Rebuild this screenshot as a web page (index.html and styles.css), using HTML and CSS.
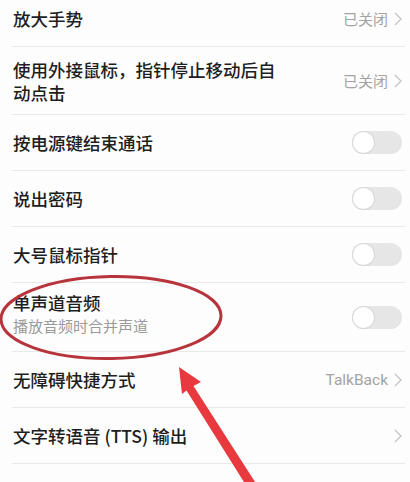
FILE: index.html
```html
<!DOCTYPE html>
<html lang="zh-CN">
<head>
<meta charset="utf-8">
<title>辅助功能</title>
<link rel="stylesheet" href="styles.css">
</head>
<body>
<div class="page">
  <ul class="list">
    <li class="row first">
      <div class="texts"><span class="title">放大手势</span></div>
      <div class="value"><span>已关闭</span><svg class="chev" viewBox="0 0 8 14"><path d="M1 1l6 6-6 6"/></svg></div>
    </li>
    <li class="row double">
      <div class="texts"><span class="title">使用外接鼠标，指针停止移动后自<br>动点击</span></div>
      <div class="value"><span>已关闭</span><svg class="chev" viewBox="0 0 8 14"><path d="M1 1l6 6-6 6"/></svg></div>
    </li>
    <li class="row">
      <div class="texts"><span class="title">按电源键结束通话</span></div>
      <div class="switch"><span class="knob"></span></div>
    </li>
    <li class="row">
      <div class="texts"><span class="title">说出密码</span></div>
      <div class="switch"><span class="knob"></span></div>
    </li>
    <li class="row">
      <div class="texts"><span class="title">大号鼠标指针</span></div>
      <div class="switch"><span class="knob"></span></div>
    </li>
    <li class="row double">
      <div class="texts"><span class="title">单声道音频</span><span class="sub">播放音频时合并声道</span></div>
      <div class="switch"><span class="knob"></span></div>
    </li>
    <li class="row">
      <div class="texts"><span class="title">无障碍快捷方式</span></div>
      <div class="value"><span class="latin">TalkBack</span><svg class="chev" viewBox="0 0 8 14"><path d="M1 1l6 6-6 6"/></svg></div>
    </li>
    <li class="row">
      <div class="texts"><span class="title">文字转语音 (TTS) 输出</span></div>
      <div class="value"><svg class="chev" viewBox="0 0 8 14"><path d="M1 1l6 6-6 6"/></svg></div>
    </li>
    <li class="row double last">
      <div class="texts"><span class="title faint">色彩校正</span></div>
      <div class="value"><span>已关闭</span></div>
    </li>
  </ul>
  <svg class="annot" viewBox="0 0 410 482" width="410" height="482">
    <ellipse cx="111" cy="317.5" rx="110" ry="41" class="ring" transform="rotate(-1 111 317)"/>
    <polygon class="arrow" points="179,367 182,394 186.5,390.5 249,490 257,485 193.5,386 201,382"/>
  </svg>
</div>
</body>
</html>
```
FILE: styles.css
```css
* { box-sizing: border-box; }
html, body { margin: 0; padding: 0; }
body {
  width: 410px;
  height: 482px;
  overflow: hidden;
  background: #fdfdfd;
  font-family: "Noto Sans CJK SC", "Noto Sans", sans-serif;
}
.page {
  position: relative;
  width: 410px;
  height: 482px;
  overflow: hidden;
}
.list {
  list-style: none;
  margin: -9px 5px 0 12px;
  padding: 0;
}
.row {
  display: flex;
  align-items: center;
  justify-content: space-between;
  height: 56px;
  padding: 0 3px 0 1px;
  border-bottom: 1px solid #e9e9e9;
}
.row.double { height: 68px; }
.row.double:nth-child(6) { height: 69px; }
.texts {
  display: flex;
  flex-direction: column;
}
.title {
  font-size: 17.5px;
  line-height: 23px;
  font-weight: 500;
  color: #1e1e1e;
}
.sub {
  font-size: 15px;
  line-height: 22px;
  color: #9a9a9a;
  margin-top: 1px;
}
.row.double:nth-child(6) .texts { margin-top: -6px; }
.faint { color: #bdbdbd; margin-top: 40px; }
.value {
  display: flex;
  align-items: center;
  gap: 6px;
  color: #a3a3a3;
  font-size: 15px;
}
.latin { font-family: Roboto, "Noto Sans", sans-serif; font-size: 15.5px; }
.chev {
  width: 8px;
  height: 14px;
  fill: none;
  stroke: #c4c4c4;
  stroke-width: 1.3;
}
.switch {
  width: 50px;
  height: 23px;
  border-radius: 12px;
  background: #e6e6e6;
  display: flex;
  align-items: center;
  padding: 0 1px;
}
.knob {
  width: 21px;
  height: 21px;
  border-radius: 50%;
  background: #ffffff;
  box-shadow: 0 0 0 1px #d8d8d8;
}
.annot {
  position: absolute;
  left: 0;
  top: 0;
  pointer-events: none;
}
.ring {
  fill: none;
  stroke: #b8343d;
  stroke-width: 3;
}
.arrow {
  fill: #e83a3e;
}
```
